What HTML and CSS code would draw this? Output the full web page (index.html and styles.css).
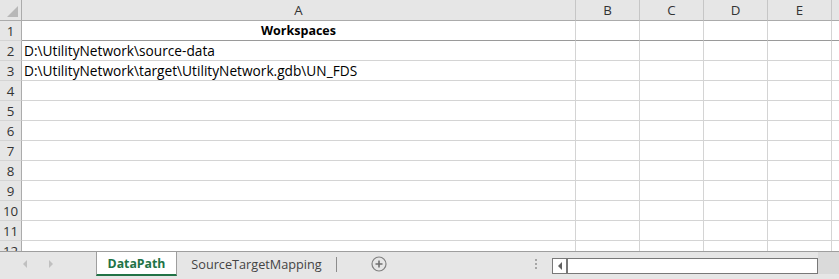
FILE: index.html
```html
<!DOCTYPE html>
<html lang="en">
<head>
    <meta charset="UTF-8">
    <title>DataPath</title>
    <link rel="stylesheet" href="styles.css">
</head>
<body>
    <div class="sheet">
        <div class="grid">
            <div class="corner"><span class="corner-tri"></span></div>
            <div class="col-head">A</div>
            <div class="col-head">B</div>
            <div class="col-head">C</div>
            <div class="col-head">D</div>
            <div class="col-head">E</div>
            <div class="col-head last"></div>

            <div class="row-head">1</div>
            <div class="cell title">Workspaces</div>
            <div class="cell title"></div>
            <div class="cell title"></div>
            <div class="cell title"></div>
            <div class="cell title"></div>
            <div class="cell title last"></div>

            <div class="row-head">2</div>
            <div class="cell">D:\UtilityNetwork\source-data</div>
            <div class="cell"></div><div class="cell"></div><div class="cell"></div><div class="cell"></div><div class="cell last"></div>

            <div class="row-head">3</div>
            <div class="cell">D:\UtilityNetwork\target\UtilityNetwork.gdb\UN_FDS</div>
            <div class="cell"></div><div class="cell"></div><div class="cell"></div><div class="cell"></div><div class="cell last"></div>

            <div class="row-head">4</div>
            <div class="cell"></div><div class="cell"></div><div class="cell"></div><div class="cell"></div><div class="cell"></div><div class="cell last"></div>
            <div class="row-head">5</div>
            <div class="cell"></div><div class="cell"></div><div class="cell"></div><div class="cell"></div><div class="cell"></div><div class="cell last"></div>
            <div class="row-head">6</div>
            <div class="cell"></div><div class="cell"></div><div class="cell"></div><div class="cell"></div><div class="cell"></div><div class="cell last"></div>
            <div class="row-head">7</div>
            <div class="cell"></div><div class="cell"></div><div class="cell"></div><div class="cell"></div><div class="cell"></div><div class="cell last"></div>
            <div class="row-head">8</div>
            <div class="cell"></div><div class="cell"></div><div class="cell"></div><div class="cell"></div><div class="cell"></div><div class="cell last"></div>
            <div class="row-head">9</div>
            <div class="cell"></div><div class="cell"></div><div class="cell"></div><div class="cell"></div><div class="cell"></div><div class="cell last"></div>
            <div class="row-head">10</div>
            <div class="cell"></div><div class="cell"></div><div class="cell"></div><div class="cell"></div><div class="cell"></div><div class="cell last"></div>
            <div class="row-head">11</div>
            <div class="cell"></div><div class="cell"></div><div class="cell"></div><div class="cell"></div><div class="cell"></div><div class="cell last"></div>
            <div class="row-head">12</div>
            <div class="cell"></div><div class="cell"></div><div class="cell"></div><div class="cell"></div><div class="cell"></div><div class="cell last"></div>
        </div>
    </div>

    <div class="tabbar">
        <div class="nav">
            <span class="arrow left"></span>
            <span class="arrow right"></span>
        </div>
        <div class="tab active">DataPath</div>
        <div class="tab other">SourceTargetMapping</div>
        <div class="tab-sep"></div>
        <div class="add-sheet">
            <svg width="16" height="16" viewBox="0 0 16 16">
                <circle cx="8" cy="8" r="7" fill="none" stroke="#808080" stroke-width="1.2"/>
                <path d="M8 4.5v7M4.5 8h7" stroke="#707070" stroke-width="1.6"/>
            </svg>
        </div>
        <div class="splitter">
            <span></span><span></span><span></span>
        </div>
        <div class="hscroll">
            <div class="hscroll-btn"><span class="tri"></span></div>
            <div class="hscroll-thumb"></div>
        </div>
        <div class="corner-box"></div>
    </div>
</body>
</html>
```

FILE: styles.css
```css
body {
    margin: 0;
    width: 839px;
    height: 279px;
    overflow: hidden;
    display: flex;
    flex-direction: column;
    background-color: #fff;
    font-family: "Open Sans", "Liberation Sans", sans-serif;
    font-size: 13.7px;
    color: #000;
}

.sheet {
    height: 251px;
    overflow: hidden;
}

.grid {
    display: grid;
    grid-template-columns: 22px 554px 64px 64px 64px 64px 7px;
    grid-template-rows: 21px repeat(12, 20px);
}

.corner,
.col-head,
.row-head {
    background-color: #e6e6e6;
    box-sizing: border-box;
    color: #333;
    font-size: 13.3px;
}

.corner {
    border-right: 1px solid #ababab;
    border-bottom: 1px solid #ababab;
    position: relative;
}

.corner-tri {
    position: absolute;
    right: 3px;
    bottom: 3px;
    width: 0;
    height: 0;
    border-left: 11px solid transparent;
    border-bottom: 11px solid #b8b8b8;
}

.col-head {
    border-right: 1px solid #c6c6c6;
    border-bottom: 1px solid #ababab;
    display: flex;
    align-items: center;
    justify-content: center;
}

.col-head.last {
    border-right: none;
}

.row-head {
    border-right: 1px solid #ababab;
    border-bottom: 1px solid #d4d4d4;
    display: flex;
    align-items: center;
    justify-content: center;
}

.cell {
    box-sizing: border-box;
    border-right: 1px solid #d4d4d4;
    border-bottom: 1px solid #d4d4d4;
    display: flex;
    align-items: center;
    padding: 0 2px;
    white-space: nowrap;
}

.cell.last {
    border-right: none;
}

.cell.title {
    border-bottom-color: #9a9a9a;
    justify-content: center;
    font-weight: bold;
    font-size: 12.5px;
}

.tabbar {
    flex: 1;
    display: flex;
    align-items: stretch;
    background-color: #e6e6e6;
    border-top: 1px solid #9e9e9e;
    color: #444;
}

.nav {
    width: 96px;
    display: flex;
    align-items: center;
    padding-left: 23px;
    padding-bottom: 3px;
    gap: 22px;
    box-sizing: border-box;
}

.arrow {
    width: 0;
    height: 0;
    border-top: 4px solid transparent;
    border-bottom: 4px solid transparent;
}

.arrow.left {
    border-right: 4px solid #c0c0c0;
}

.arrow.right {
    border-left: 4px solid #c0c0c0;
}

.tab {
    height: 24px;
    display: flex;
    align-items: center;
    justify-content: center;
    box-sizing: border-box;
    font-size: 12.7px;
}

.tab.active {
    width: 81px;
    margin-top: -1px;
    height: 25px;
    background-color: #fff;
    border: 1px solid #9e9e9e;
    border-bottom: 2px solid #217346;
    color: #217346;
    font-weight: bold;
    font-size: 12.3px;
}

.tab.other {
    width: 159px;
}

.tab-sep {
    width: 1px;
    height: 15px;
    margin-top: 5px;
    background-color: #8c8c8c;
}

.add-sheet {
    width: 83px;
    display: flex;
    align-items: center;
    justify-content: center;
    padding-bottom: 4px;
}

.splitter {
    width: 32px;
    margin-left: auto;
    display: flex;
    flex-direction: column;
    align-items: center;
    justify-content: center;
    gap: 2px;
    padding-bottom: 4px;
}

.splitter span {
    width: 2px;
    height: 2px;
    background-color: #a6a6a6;
}

.hscroll {
    width: 266px;
    height: 16px;
    margin-top: 6px;
    box-sizing: border-box;
    border: 1px solid #787878;
    display: flex;
    background-color: #fff;
}

.hscroll-btn {
    width: 13px;
    border-right: 2px solid #787878;
    display: flex;
    align-items: center;
    justify-content: center;
}

.tri {
    width: 0;
    height: 0;
    border-top: 4px solid transparent;
    border-bottom: 4px solid transparent;
    border-right: 4px solid #606060;
}

.hscroll-thumb {
    flex: 1;
}

.corner-box {
    width: 21px;
    height: 22px;
    background-color: #dadada;
}
```
